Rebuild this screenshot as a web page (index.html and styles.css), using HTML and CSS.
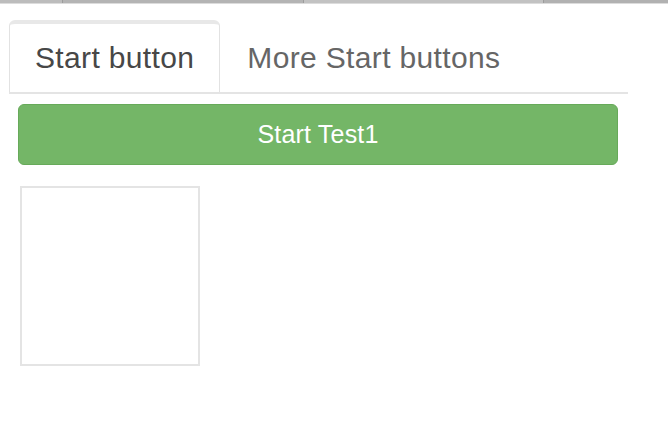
FILE: index.html
```html
<!DOCTYPE html>
<html lang="en">
<head>
<meta charset="utf-8">
<title>Start buttons</title>
<link rel="stylesheet" href="styles.css">
</head>
<body>
<div class="chrome">
  <div class="seg seg-a"></div>
  <div class="seg seg-b"></div>
  <div class="seg seg-c"></div>
  <div class="seg seg-d"></div>
</div>
<div class="page">
  <ul class="tabs">
    <li class="tab active">Start button</li>
    <li class="tab">More Start buttons</li>
  </ul>
  <button class="start-btn" type="button">Start Test1</button>
  <div class="box"></div>
</div>
</body>
</html>
```
FILE: styles.css
```css
html, body {
  margin: 0;
  padding: 0;
  background: #fff;
  font-family: "Liberation Sans", Arial, sans-serif;
}

.chrome {
  display: flex;
  height: 3px;
  border-bottom: 1px solid #dcdcdc;
}
.seg {
  height: 3px;
  border-right: 1px solid #9c9c9c;
}
.seg-a { width: 62px; background: #bcbcbc; }
.seg-b { width: 240px; background: #b4b4b4; }
.seg-c { width: 239px; background: #c2c2c2; }
.seg-d { flex: 1; background: #b1b1b1; border-right: none; }

.page {
  padding: 0 8px;
}

.tabs {
  list-style: none;
  margin: 16px 32px 0 1px;
  padding: 0;
  display: flex;
  border-bottom: 2px solid #e4e4e4;
}
.tab {
  font-size: 30px;
  line-height: 36px;
  letter-spacing: 0.35px;
  padding: 16px 25px;
  color: #666;
  border: 1px solid transparent;
  border-top-width: 4px;
  border-bottom: none;
  border-radius: 6px 6px 0 0;
  margin-right: 1px;
}
.tab.active {
  color: #474747;
  border-color: #e2e2e2;
  border-top-color: #e8e8e8;
}

.start-btn {
  display: block;
  margin: 10px 0 0 10px;
  width: 600px;
  height: 61px;
  background: #74b667;
  border: 1px solid #67aa5a;
  border-radius: 6px;
  color: #fff;
  font-family: "Liberation Sans", Arial, sans-serif;
  font-size: 25px;
  letter-spacing: 0.2px;
  padding: 0;
}

.box {
  margin: 21px 0 0 12px;
  width: 176px;
  height: 176px;
  border: 2px solid #e4e4e4;
}
```
